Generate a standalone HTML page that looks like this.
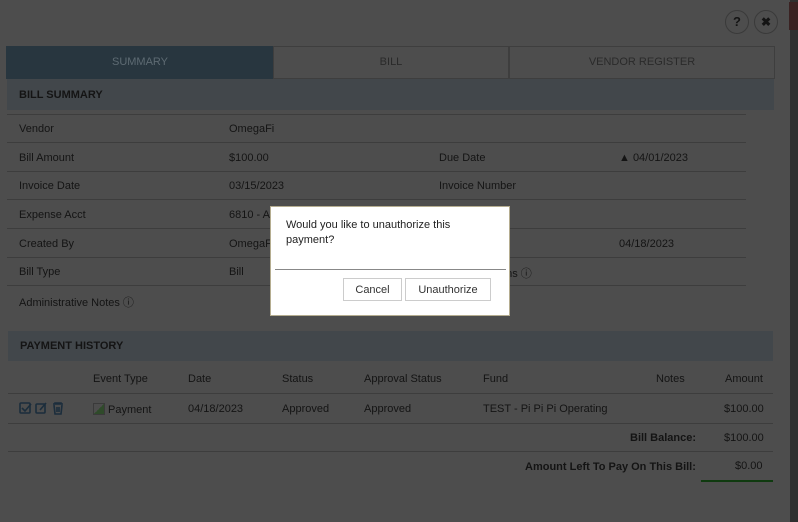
<!DOCTYPE html>
<html><head><style>
*{margin:0;padding:0;box-sizing:border-box}
body{width:798px;height:522px;background:#4d4d4d;font-family:"Liberation Sans",sans-serif;font-size:11px;color:#141414;position:relative;overflow:hidden}
.a{position:absolute;white-space:nowrap}
.line{position:absolute;height:1px;background:#3d3d3d}
.b{font-weight:bold}
</style></head><body>
<div class="a" style="left:790px;top:0;width:8px;height:522px;background:#2f2f2f"></div>
<div class="a" style="left:789px;top:2px;width:9px;height:28px;background:#3a2222"></div>
<div class="a" style="left:725px;top:10px;width:24px;height:24px;border:1px solid #3a3a3a;border-radius:50%;text-align:center;line-height:22px;font-weight:bold;font-size:13px">?</div>
<div class="a" style="left:754px;top:10px;width:24px;height:24px;border:1px solid #3a3a3a;border-radius:50%;text-align:center;line-height:22px;font-weight:bold;font-size:12px">✖</div>
<div class="a" style="left:6px;top:46px;width:268px;height:33px;background:#28363f;color:#5e6b73;text-align:center;line-height:33px">SUMMARY</div>
<div class="a" style="left:273px;top:46px;width:236px;height:33px;border:1px solid #3e3e3e;text-align:center;line-height:31px;color:#2a2a2a">BILL</div>
<div class="a" style="left:509px;top:46px;width:266px;height:33px;border:1px solid #3e3e3e;text-align:center;line-height:31px;color:#2a2a2a">VENDOR REGISTER</div>
<div class="a b" style="left:7px;top:79px;width:767px;height:31px;background:#42474b;line-height:33px;padding-left:12px">BILL SUMMARY</div>
<div class="line" style="left:7px;top:114px;width:739px"></div>
<div class="line" style="left:7px;top:142px;width:739px"></div>
<div class="line" style="left:7px;top:171px;width:739px"></div>
<div class="line" style="left:7px;top:199px;width:739px"></div>
<div class="line" style="left:7px;top:228px;width:739px"></div>
<div class="line" style="left:7px;top:257px;width:739px"></div>
<div class="line" style="left:7px;top:285px;width:739px"></div>
<div class="a" style="left:19px;top:123px">Vendor</div><div class="a" style="left:229px;top:123px">OmegaFi</div>
<div class="a" style="left:19px;top:152px">Bill Amount</div><div class="a" style="left:229px;top:152px">$100.00</div>
<div class="a" style="left:439px;top:152px">Due Date</div><div class="a" style="left:619px;top:152px">▲ 04/01/2023</div>
<div class="a" style="left:19px;top:180px">Invoice Date</div><div class="a" style="left:229px;top:180px">03/15/2023</div>
<div class="a" style="left:439px;top:180px">Invoice Number</div>
<div class="a" style="left:19px;top:209px">Expense Acct</div><div class="a" style="left:229px;top:209px">6810 - A</div>
<div class="a" style="left:19px;top:238px">Created By</div><div class="a" style="left:229px;top:238px">OmegaF</div><div class="a" style="left:619px;top:238px">04/18/2023</div>
<div class="a" style="left:19px;top:266px">Bill Type</div><div class="a" style="left:229px;top:266px">Bill</div><div class="a" style="left:500px;top:265px">ons ⓘ</div>
<div class="a" style="left:19px;top:294px">Administrative Notes ⓘ</div>
<div class="a b" style="left:8px;top:331px;width:765px;height:30px;background:#42474b;line-height:31px;padding-left:12px">PAYMENT HISTORY</div>
<div class="a" style="left:93px;top:373px">Event Type</div><div class="a" style="left:188px;top:373px">Date</div><div class="a" style="left:282px;top:373px">Status</div><div class="a" style="left:364px;top:373px">Approval Status</div><div class="a" style="left:483px;top:373px">Fund</div><div class="a" style="left:656px;top:373px">Notes</div><div class="a" style="left:725px;top:373px">Amount</div>
<div class="line" style="left:8px;top:393px;width:765px"></div>
<svg class="a" style="left:19px;top:401px" width="46" height="14" viewBox="0 0 46 14" fill="none" stroke="#1b2d3c" stroke-width="1.6">
<rect x="1" y="2" width="10" height="10" rx="1"/><path d="M3 7l3 3 6-7"/>
<rect x="17" y="3" width="9" height="9" rx="1"/><path d="M21 9l6-7"/>
<path d="M34 3h10M36 3v-1h6v1M35 4l1 9h6l1-9M38 6v5M40 6v5"/></svg>
<div class="a" style="left:93px;top:403px"><span style="display:inline-block;width:12px;height:12px;border:1px solid #3a3a3a;vertical-align:-2px;background:linear-gradient(135deg,#4d4d4d 50%,#2f4a2a 50%)"></span> Payment</div><div class="a" style="left:188px;top:403px">04/18/2023</div><div class="a" style="left:282px;top:403px">Approved</div><div class="a" style="left:364px;top:403px">Approved</div><div class="a" style="left:483px;top:403px">TEST - Pi Pi Pi Operating</div><div class="a" style="left:724px;top:403px">$100.00</div>
<div class="line" style="left:8px;top:423px;width:765px"></div>
<div class="a b" style="left:630px;top:432px">Bill Balance:</div><div class="a" style="left:724px;top:432px">$100.00</div>
<div class="line" style="left:8px;top:451px;width:765px"></div>
<div class="a b" style="left:525px;top:461px">Amount Left To Pay On This Bill:</div><div class="a" style="left:735px;top:460px">$0.00</div>
<div class="a" style="left:701px;top:480px;width:72px;height:2px;background:#0f3a0f"></div>
<div class="a" style="left:270px;top:206px;width:240px;height:110px;background:#fff;border:1px solid #b5ad90"></div>
<div class="a" style="left:286px;top:218px;color:#222;line-height:15px;white-space:normal;width:210px">Would you like to unauthorize this payment?</div>
<div class="a" style="left:275px;top:269px;width:231px;height:1px;background:#888"></div>
<div class="a" style="left:343px;top:278px;width:59px;height:23px;border:1px solid #ccc;text-align:center;line-height:22px;color:#333">Cancel</div>
<div class="a" style="left:405px;top:278px;width:86px;height:23px;border:1px solid #ccc;text-align:center;line-height:22px;color:#333">Unauthorize</div>
</body></html>
